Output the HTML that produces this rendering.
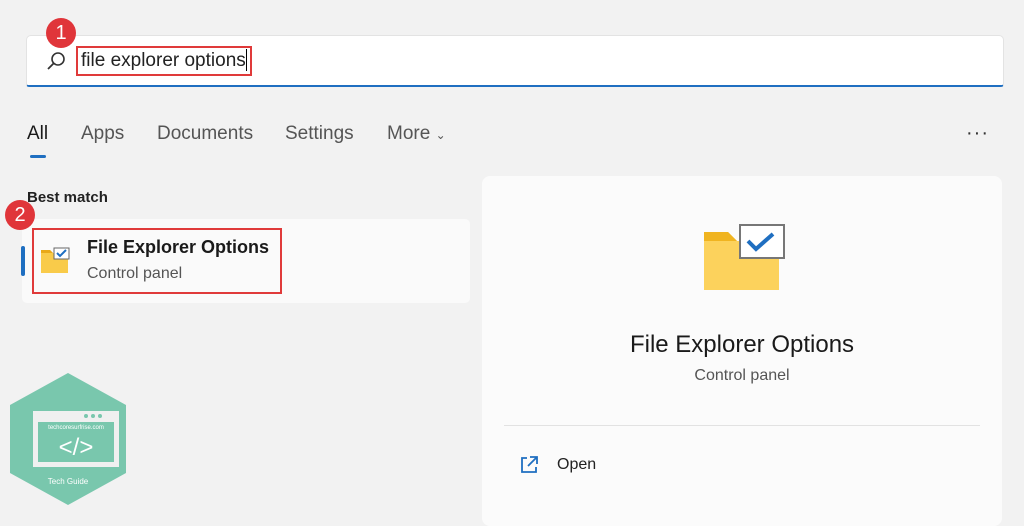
<!DOCTYPE html>
<html><head><style>
body{margin:0;width:1024px;height:517px;background:#f2f2f2;font-family:"Liberation Sans",sans-serif;position:relative;overflow:hidden;color:#1a1a1a}
.a{position:absolute}
</style></head><body>
<div class="a" style="left:26px;top:35px;width:976px;height:49px;background:#fff;border:1px solid #e3e3e3;border-bottom:2px solid #1f6fc1;border-radius:5px 5px 3px 3px"></div>
<svg class="a" style="left:45px;top:50px" width="22" height="22" viewBox="0 0 22 22"><circle cx="13" cy="9" r="6" fill="none" stroke="#333" stroke-width="1.6"/><path d="M8.5 13.5L3 19" stroke="#333" stroke-width="1.8"/></svg>
<div class="a" style="left:76px;top:46px;width:172px;height:26px;border:2px solid #e03a3a"></div>
<div class="a" style="left:81px;top:50px;font-size:19px;color:#222">file explorer options</div>
<div class="a" style="left:246px;top:49px;width:1px;height:22px;background:#000"></div>
<div class="a" style="left:46px;top:18px;width:30px;height:30px;border-radius:50%;background:#e0353a;color:#fff;font-size:20px;text-align:center;line-height:30px">1</div>
<div class="a" style="left:27px;top:123px;font-size:19px;color:#1a1a1a">All</div>
<div class="a" style="left:30px;top:155px;width:16px;height:3px;border-radius:2px;background:#1f6fc1"></div>
<div class="a" style="left:81px;top:123px;font-size:19px;color:#555">Apps</div>
<div class="a" style="left:157px;top:123px;font-size:19px;color:#555">Documents</div>
<div class="a" style="left:285px;top:123px;font-size:19px;color:#555">Settings</div>
<div class="a" style="left:387px;top:123px;font-size:19px;color:#555">More <span style="font-size:12px">&#8964;</span></div>
<div class="a" style="left:966px;top:122px;font-size:20px;color:#333;letter-spacing:1px">&middot;&middot;&middot;</div>
<div class="a" style="left:27px;top:189px;font-size:15px;font-weight:bold;color:#222">Best match</div>
<div class="a" style="left:22px;top:219px;width:448px;height:84px;background:#fafafa;border-radius:5px"></div>
<div class="a" style="left:21px;top:246px;width:4px;height:30px;border-radius:2px;background:#1f6fc1"></div>
<div class="a" style="left:5px;top:200px;width:30px;height:30px;border-radius:50%;background:#e0353a;color:#fff;font-size:20px;text-align:center;line-height:30px">2</div>
<div class="a" style="left:32px;top:228px;width:246px;height:62px;border:2px solid #e03a3a"></div>
<svg class="a" style="left:40px;top:246px" width="32" height="28" viewBox="0 0 32 28"><path d="M1 4h9l3 3h15v20H1z" fill="#f9cb4a"/><path d="M1 4h9l3 3H1z" fill="#e9a918"/><rect x="14" y="2" width="15" height="11" fill="#fff" stroke="#666"/><path d="M17 7l3 3 6-6" stroke="#1f6fc1" stroke-width="2" fill="none"/></svg>
<div class="a" style="left:87px;top:237px;font-size:18px;font-weight:bold;color:#1a1a1a">File Explorer Options</div>
<div class="a" style="left:87px;top:265px;font-size:16px;color:#555">Control panel</div>
<div class="a" style="left:482px;top:176px;width:520px;height:350px;background:#fbfbfb;border-radius:8px"></div>
<svg class="a" style="left:702px;top:222px" width="86" height="70" viewBox="0 0 86 70"><path d="M2 10h24l9 9h42v49H2z" fill="#fcd25c"/><path d="M2 10h24l9 9H2z" fill="#f0b420"/><rect x="38" y="3" width="44" height="33" fill="#fff" stroke="#777" stroke-width="2"/><path d="M46 19l8 8 17-15" stroke="#1f6fc1" stroke-width="4" fill="none"/></svg>
<div class="a" style="left:482px;width:520px;top:331px;text-align:center;font-size:24px;color:#1a1a1a">File Explorer Options</div>
<div class="a" style="left:482px;width:520px;top:367px;text-align:center;font-size:16px;color:#555">Control panel</div>
<div class="a" style="left:504px;top:425px;width:476px;height:1px;background:#e2e2e2"></div>
<svg class="a" style="left:519px;top:455px" width="20" height="20" viewBox="0 0 20 20"><path d="M8 3H3v14h14v-5" fill="none" stroke="#1f6fc1" stroke-width="1.8"/><path d="M11 2h7v7M18 2l-9 9" fill="none" stroke="#1f6fc1" stroke-width="1.8"/></svg>
<div class="a" style="left:557px;top:456px;font-size:16px;color:#222">Open</div>
<svg class="a" style="left:7px;top:371px" width="122" height="136" viewBox="0 0 122 136"><path d="M61 2l58 32v68l-58 32L3 102V34z" fill="#79c7ad"/><rect x="26" y="40" width="86" height="56" fill="#f0f0f0"/><rect x="31" y="51" width="76" height="40" fill="#79c7ad"/><circle cx="79" cy="45" r="2" fill="#79c7ad"/><circle cx="86" cy="45" r="2" fill="#79c7ad"/><circle cx="93" cy="45" r="2" fill="#79c7ad"/><text x="69" y="58" font-size="6" fill="#fff" text-anchor="middle" font-family="Liberation Sans">techcoresurfrise.com</text><text x="69" y="84" font-size="24" fill="#fff" text-anchor="middle" font-family="Liberation Sans">&lt;/&gt;</text><text x="61" y="113" font-size="8" fill="#fff" text-anchor="middle" font-family="Liberation Sans">Tech Guide</text></svg>
</body></html>
